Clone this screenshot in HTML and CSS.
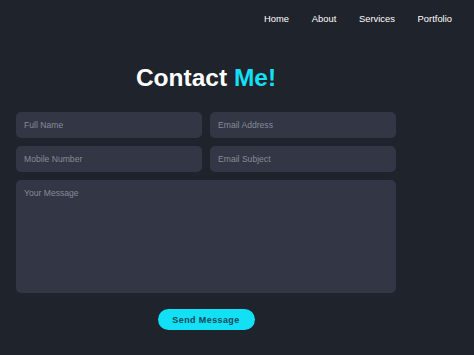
FILE: index.html
```html
<!DOCTYPE html>
<html>
<head>
<meta charset="utf-8">
<link rel="stylesheet" href="styles.css">
</head>
<body>
<header class="nav">
  <a href="#">Home</a>
  <a href="#">About</a>
  <a href="#">Services</a>
  <a href="#">Portfolio</a>
</header>
<section class="contact">
  <h2 class="title">Contact <span class="accent">Me!</span></h2>
  <form class="form">
    <div class="row">
      <input type="text" placeholder="Full Name">
      <input type="email" placeholder="Email Address">
    </div>
    <div class="row">
      <input type="text" placeholder="Mobile Number">
      <input type="text" placeholder="Email Subject">
    </div>
    <textarea placeholder="Your Message"></textarea>
    <div class="actions">
      <button type="button" class="btn">Send Message</button>
    </div>
  </form>
</section>
</body>
</html>
```
FILE: styles.css
```css
* { box-sizing: border-box; }
html, body { margin: 0; padding: 0; }
body {
  background: #1f232b;
  font-family: "Liberation Sans", Arial, sans-serif;
  color: #fff;
  width: 474px;
  height: 355px;
  overflow: hidden;
}
.nav {
  display: flex;
  justify-content: flex-end;
  gap: 22.7px;
  padding: 12px 22px 0 0;
  height: 30px;
}
.nav a {
  color: #fff;
  text-decoration: none;
  font-size: 9.4px;
  line-height: 13px;
}
.contact {
  width: 380px;
  margin-left: 16px;
}
.title {
  margin: 34px 0 0;
  text-align: center;
  font-size: 24.5px;
  line-height: 28px;
  font-weight: bold;
}
.accent { color: #12e0f5; }
.form {
  margin-top: 20px;
  display: flex;
  flex-direction: column;
  gap: 8px;
}
.row {
  display: flex;
  gap: 8px;
}
input, textarea {
  width: 100%;
  background: #323645;
  border: none;
  border-radius: 5px;
  color: #fff;
  font-family: "Liberation Sans", Arial, sans-serif;
  font-size: 8.6px;
  padding: 0 8px;
  outline: none;
}
input { flex: 1; height: 26px; min-width: 0; }
textarea {
  flex: none;
  height: 113px;
  padding: 8px 8px;
  resize: none;
  display: block;
}
::placeholder { color: #868b98; opacity: 1; }
.actions {
  display: flex;
  justify-content: center;
  margin-top: 8px;
}
.btn {
  width: 97px;
  height: 21px;
  border: none;
  border-radius: 11px;
  background: #12e0f5;
  color: #1d4658;
  font-family: "Liberation Sans", Arial, sans-serif;
  font-weight: bold;
  font-size: 9px;
  letter-spacing: 0.4px;
  padding: 0;
}
```
